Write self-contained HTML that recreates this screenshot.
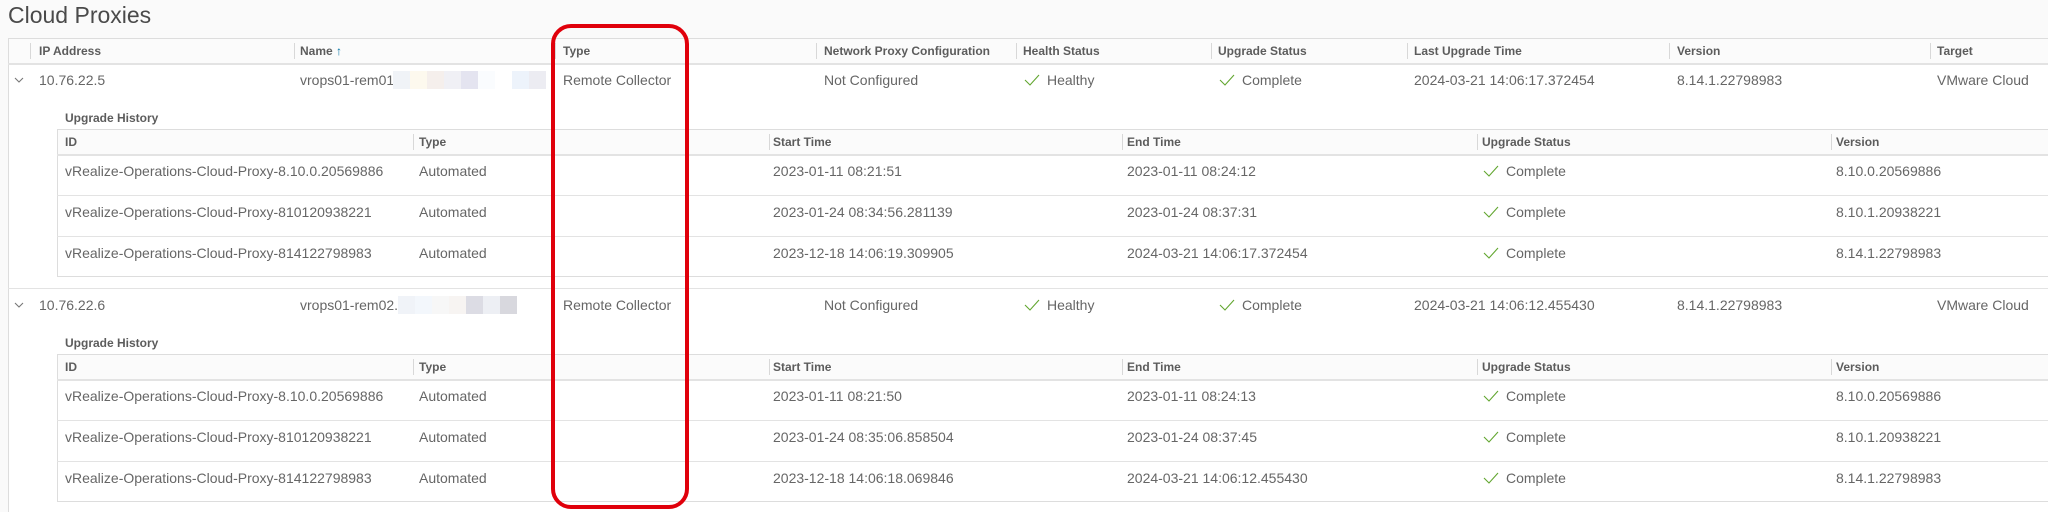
<!DOCTYPE html>
<html><head><meta charset="utf-8"><style>
*{margin:0;padding:0;box-sizing:border-box}
body{width:2048px;height:512px;background:#fafafa;position:relative;overflow:hidden;font-family:"Liberation Sans",sans-serif;color:#666}
.a{position:absolute;white-space:nowrap}
.t{font-size:23px;color:#4a4a4a;left:8px;top:2px}
.h{font-size:12px;font-weight:bold;color:#5c5c5c;transform:translateY(-50%)}
.v{font-size:14px;color:#666;transform:translateY(-50%)}
.l{position:absolute;background:#e3e3e3}
.d{position:absolute;width:1px;background:#d8d8d8}
.ck{position:absolute;width:16px;height:12px}
</style></head><body>
<div class="a t">Cloud Proxies</div>
<div style="position:absolute;left:8px;top:38px;width:2048px;height:474px;background:#fff;border-left:1px solid #ddd;border-top:1px solid #ddd"></div>
<div style="position:absolute;left:9px;top:39px;width:2040px;height:24px;background:#fbfbfb"></div>
<div class="l" style="left:8px;top:63px;width:2040px;height:2px"></div>
<div class="l" style="left:8px;top:288px;width:2040px;height:1px"></div>
<div class="d" style="left:30px;top:43px;height:16px"></div>
<div class="d" style="left:294px;top:43px;height:16px"></div>
<div class="d" style="left:555px;top:43px;height:16px"></div>
<div class="d" style="left:816px;top:43px;height:16px"></div>
<div class="d" style="left:1016px;top:43px;height:16px"></div>
<div class="d" style="left:1211px;top:43px;height:16px"></div>
<div class="d" style="left:1407px;top:43px;height:16px"></div>
<div class="d" style="left:1669px;top:43px;height:16px"></div>
<div class="d" style="left:1930px;top:43px;height:16px"></div>
<div class="a h" style="left:39px;top:51px">IP Address</div>
<div class="a h" style="left:300px;top:51px">Name <span style="color:#0072a3">&#8593;</span></div>
<div class="a h" style="left:563px;top:51px">Type</div>
<div class="a h" style="left:824px;top:51px">Network Proxy Configuration</div>
<div class="a h" style="left:1023px;top:51px">Health Status</div>
<div class="a h" style="left:1218px;top:51px">Upgrade Status</div>
<div class="a h" style="left:1414px;top:51px">Last Upgrade Time</div>
<div class="a h" style="left:1677px;top:51px">Version</div>
<div class="a h" style="left:1937px;top:51px">Target</div>

<svg width="0" height="0" style="position:absolute"><defs><symbol id="c" viewBox="0 0 16 12"><path d="M1 6 L6 11 L15 1" fill="none" stroke="#62a630" stroke-width="1.1"/></symbol><symbol id="ch" viewBox="0 0 10 6"><path d="M1 1 L5 5 L9 1" fill="none" stroke="#777" stroke-width="1.1"/></symbol></defs></svg>

<div id="r1"></div>
<script>
function row(y,ip,name,blur,start,end,ids,subY){
 let h='';
 h+=`<svg class="a" style="left:14px;top:${y-3}px" width="10" height="6"><use href="#ch"/></svg>`;
 h+=`<div class="a v" style="left:39px;top:${y}px">${ip}</div>`;
 h+=`<div class="a v" style="left:300px;top:${y}px">${name}</div>`;
 blur.forEach(b=>{h+=`<div style="position:absolute;left:${b[0]}px;top:${y-9}px;width:${b[1]}px;height:18px;background:${b[2]}"></div>`});
 h+=`<div class="a v" style="left:563px;top:${y}px">Remote Collector</div>`;
 h+=`<div class="a v" style="left:824px;top:${y}px">Not Configured</div>`;
 h+=`<svg class="ck" style="left:1024px;top:${y-6}px"><use href="#c"/></svg><div class="a v" style="left:1047px;top:${y}px">Healthy</div>`;
 h+=`<svg class="ck" style="left:1219px;top:${y-6}px"><use href="#c"/></svg><div class="a v" style="left:1242px;top:${y}px">Complete</div>`;
 h+=`<div class="a v" style="left:1414px;top:${y}px">${end[2]}</div>`;
 h+=`<div class="a v" style="left:1677px;top:${y}px">8.14.1.22798983</div>`;
 h+=`<div class="a v" style="left:1937px;top:${y}px">VMware Cloud</div>`;
 h+=`<div class="a h" style="left:65px;top:${subY-11}px">Upgrade History</div>`;
 let st=subY;
 h+=`<div style="position:absolute;left:57px;top:${st}px;width:1991px;height:148px;border:1px solid #ddd;border-right:none;background:#fff"></div>`;
 h+=`<div style="position:absolute;left:58px;top:${st+1}px;width:1990px;height:24px;background:#fbfbfb"></div>`;
 h+=`<div class="l" style="left:57px;top:${st+25}px;width:1991px;height:2px"></div>`;
 h+=`<div class="l" style="left:57px;top:${st+66}px;width:1991px;height:1px"></div>`;
 h+=`<div class="l" style="left:57px;top:${st+107}px;width:1991px;height:1px"></div>`;
 [413,769,1122,1477,1831].forEach(x=>{h+=`<div class="d" style="left:${x}px;top:${st+5}px;height:16px"></div>`});
 const hy=st+13;
 [['ID',65],['Type',419],['Start Time',773],['End Time',1127],['Upgrade Status',1482],['Version',1836]].forEach(c=>{h+=`<div class="a h" style="left:${c[1]}px;top:${hy}px">${c[0]}</div>`});
 const vers=['8.10.0.20569886','8.10.1.20938221','8.14.1.22798983'];
 for(let i=0;i<3;i++){
  const ry=st+42+i*41;
  h+=`<div class="a v" style="left:65px;top:${ry}px">${ids[i]}</div>`;
  h+=`<div class="a v" style="left:419px;top:${ry}px">Automated</div>`;
  h+=`<div class="a v" style="left:773px;top:${ry}px">${start[i]}</div>`;
  h+=`<div class="a v" style="left:1127px;top:${ry}px">${end[i]}</div>`;
  h+=`<svg class="ck" style="left:1483px;top:${ry-6}px"><use href="#c"/></svg><div class="a v" style="left:1506px;top:${ry}px">Complete</div>`;
  h+=`<div class="a v" style="left:1836px;top:${ry}px">${vers[i]}</div>`;
 }
 return h;
}
const ids=['vRealize-Operations-Cloud-Proxy-8.10.0.20569886','vRealize-Operations-Cloud-Proxy-810120938221','vRealize-Operations-Cloud-Proxy-814122798983'];
let html=row(80,'10.76.22.5','vrops01-rem01',[[393,17,'#f0f3f7'],[410,17,'#fdf9ee'],[427,17,'#f5efec'],[444,17,'#f0f0f5'],[461,17,'#e4e4f0'],[478,17,'#fafcfe'],[512,17,'#edf3fb'],[529,17,'#ececf2']],
 ['2023-01-11 08:21:51','2023-01-24 08:34:56.281139','2023-12-18 14:06:19.309905'],
 ['2023-01-11 08:24:12','2023-01-24 08:37:31','2024-03-21 14:06:17.372454'],ids,129);
html+=row(305,'10.76.22.6','vrops01-rem02.',[[398,17,'#f0f3f8'],[415,17,'#f3f7fc'],[432,17,'#f7f7f7'],[449,17,'#f7f4f2'],[466,17,'#dcdce4'],[483,17,'#edeff4'],[500,17,'#d8d8de']],
 ['2023-01-11 08:21:50','2023-01-24 08:35:06.858504','2023-12-18 14:06:18.069846'],
 ['2023-01-11 08:24:13','2023-01-24 08:37:45','2024-03-21 14:06:12.455430'],ids,354);
document.getElementById('r1').outerHTML=html;
</script>
<div style="position:absolute;left:551px;top:24px;width:138px;height:485px;border:4px solid #e0000b;border-radius:20px"></div>
</body></html>
